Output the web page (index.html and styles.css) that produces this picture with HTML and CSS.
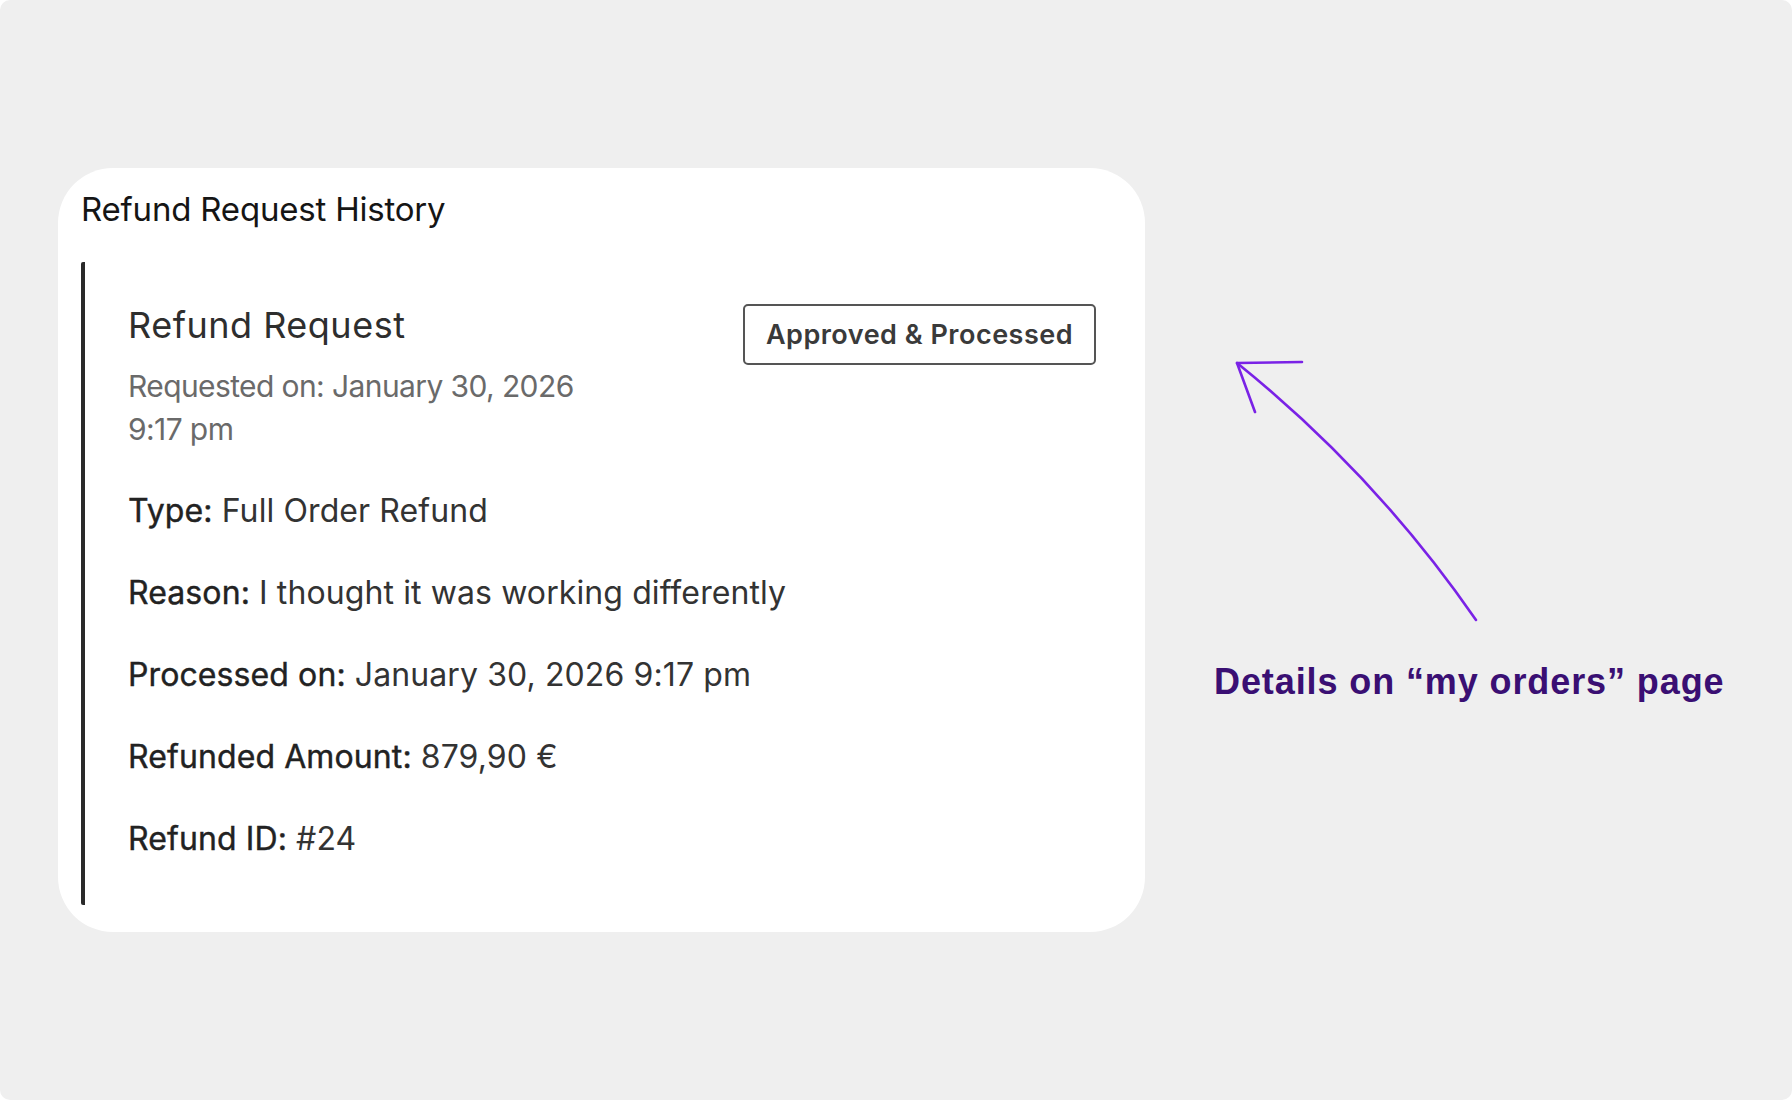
FILE: index.html
```html
<!DOCTYPE html>
<html lang="en">
<head>
<meta charset="utf-8">
<title>Refund Request History</title>
<link rel="stylesheet" href="styles.css">
</head>
<body>
<div class="frame">
  <section class="card">
    <h2 class="card-title">Refund Request History</h2>
    <div class="entry">
      <div class="entry-head">
        <div class="entry-info">
          <h3 class="entry-title">Refund Request</h3>
          <p class="entry-date">Requested on: January 30, 2026 9:17 pm</p>
        </div>
        <span class="badge">Approved &amp; Processed</span>
      </div>
      <p class="row"><span class="label">Type:</span> Full Order Refund</p>
      <p class="row"><span class="label">Reason:</span> I thought it was working differently</p>
      <p class="row"><span class="label">Processed on:</span> January 30, 2026 9:17 pm</p>
      <p class="row"><span class="label">Refunded Amount:</span> 879,90 €</p>
      <p class="row"><span class="label">Refund ID:</span> #24</p>
    </div>
  </section>
  <aside class="note">
    <svg class="note-arrow" width="300" height="280" viewBox="0 0 300 280" fill="none" stroke="#7a22e6" stroke-width="2.6" stroke-linecap="round" stroke-linejoin="round">
      <path d="M262 270 Q161.5 124.5 23 13"/>
      <path d="M88 12 L23 13 L41 62"/>
    </svg>
    <p class="note-text">Details on “my orders” page</p>
  </aside>
</div>
</body>
</html>
```
FILE: styles.css
```css
html, body {
  margin: 0;
  padding: 0;
  background: #ffffff;
}

.frame {
  width: 1792px;
  height: 1100px;
  box-sizing: border-box;
  background: #efefef;
  border-radius: 10px;
  display: flex;
  align-items: flex-start;
  padding: 168px 0 0 58px;
  font-family: Inter, "Noto Sans", sans-serif;
}

.card {
  width: 1087px;
  box-sizing: border-box;
  background: #ffffff;
  border-radius: 55px;
  padding: 21px 49px 27px 23px;
}

.card-title {
  margin: 0 0 33px 0;
  font-size: 33px;
  line-height: 40px;
  font-weight: 400;
  color: #151515;
  letter-spacing: -0.2px;
}

.entry {
  border-left: 4px solid #2a2a2a;
  border-radius: 2px;
  padding: 41px 0 44px 43px;
  display: flex;
  flex-direction: column;
  gap: 38px;
}

.entry-head {
  display: flex;
  justify-content: space-between;
  align-items: flex-start;
}

.entry-info {
  width: 480px;
}

.entry-title {
  margin: 0 0 18px 0;
  font-size: 36px;
  line-height: 44px;
  font-weight: 400;
  color: #2e2e2e;
  letter-spacing: 0.5px;
}

.entry-date {
  margin: 0;
  font-size: 30px;
  line-height: 43px;
  color: #6a6a6a;
  letter-spacing: -0.6px;
}

.badge {
  margin-top: 1px;
  box-sizing: border-box;
  height: 61px;
  width: 353px;
  display: flex;
  align-items: center;
  justify-content: center;
  border: 2px solid #555555;
  border-radius: 5px;
  font-size: 27px;
  font-weight: 600;
  color: #3a3a3a;
  letter-spacing: 0.5px;
}

.row {
  margin: 0;
  font-size: 32px;
  line-height: 44px;
  color: #333333;
  letter-spacing: 0.1px;
}

.label {
  font-weight: 400;
  color: #222222;
  -webkit-text-stroke: 0.4px #222222;
}

.note {
  margin-left: 69px;
  padding-top: 182px;
  display: flex;
  flex-direction: column;
}

.note-arrow {
  display: block;
}

.note-text {
  margin: 30px 0 0 0;
  font-family: "Liberation Sans", Arial, sans-serif;
  font-size: 36px;
  line-height: 43px;
  font-weight: 700;
  color: #3a0f73;
  white-space: nowrap;
  letter-spacing: 0.9px;
}
```
